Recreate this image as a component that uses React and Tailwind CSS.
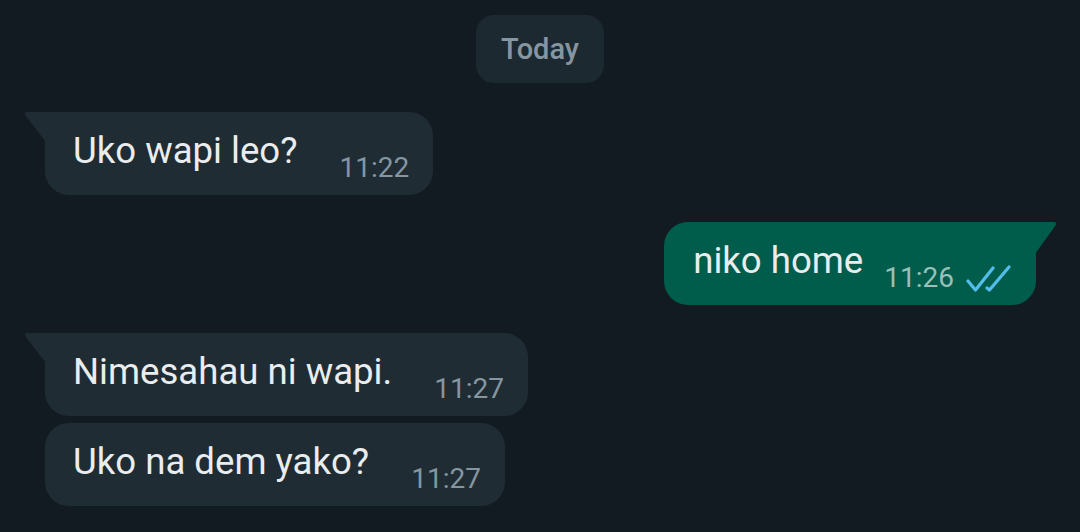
import React from "react";

const messages = [
  { id: 1, text: "Uko wapi leo?", time: "11:22", out: false, tail: true, gap: "ml-[42px]", top: "mt-[29px]" },
  { id: 2, text: "niko home", time: "11:26", out: true, tail: true, gap: "ml-[21px]", top: "mt-[27px]" },
  { id: 3, text: "Nimesahau ni wapi.", time: "11:27", out: false, tail: true, gap: "ml-[42px]", top: "mt-[28px]" },
  { id: 4, text: "Uko na dem yako?", time: "11:27", out: false, tail: false, gap: "ml-[42px]", top: "mt-[7px]" },
];

function Ticks() {
  return (
    <svg width="45" height="29" viewBox="0 0 45 29" className="ml-[12px] mt-[2px]" fill="none">
      <path d="M2 17 L9.5 26 L27 4" stroke="#53bdeb" strokeWidth="3.2" strokeLinecap="round" strokeLinejoin="round" />
      <path d="M21 24 L23.5 26 L43 3" stroke="#53bdeb" strokeWidth="3.2" strokeLinecap="round" strokeLinejoin="round" />
    </svg>
  );
}

function Tail({ out }) {
  if (out) {
    return (
      <svg width="22" height="32" viewBox="0 0 22 32" className="absolute top-0 right-[-21px]">
        <path d="M0 0 H19 Q22 0 20.5 3.5 L0 32 Z" fill="#005c4b" />
      </svg>
    );
  }
  return (
    <svg width="22" height="30" viewBox="0 0 22 30" className="absolute top-0 left-[-21px]">
      <path d="M22 0 H3 Q0 0 1.5 3.5 L22 30 Z" fill="#202c33" />
    </svg>
  );
}

function Bubble({ m }) {
  const shape = m.tail
    ? m.out
      ? "rounded-[24px] rounded-tr-none"
      : "rounded-[24px] rounded-tl-none"
    : "rounded-[24px]";
  return (
    <div className={`flex ${m.out ? "justify-end pr-[44px]" : "pl-[45px]"} ${m.top}`}>
      <div
        className={`relative flex items-start pt-[17px] pb-[11px] ${m.out ? "bg-[#005c4b] pl-[29px] pr-[25px]" : "bg-[#202c33] pl-[28px] pr-[24px]"} ${shape}`}
      >
        {m.tail && <Tail out={m.out} />}
        <span className="text-[36.6px] leading-[44px] text-[#e9edef] whitespace-nowrap">{m.text}</span>
        <span
          className={`${m.gap} mt-[23px] flex items-start text-[28px] leading-[32px] whitespace-nowrap ${m.out ? "text-[#99c1b9]" : "text-[#8696a0]"}`}
        >
          {m.time}
          {m.out && <Ticks />}
        </span>
      </div>
    </div>
  );
}

export default function App() {
  return (
    <div
      className="w-[1080px] h-[532px] overflow-hidden bg-[#111b21] flex flex-col"
      style={{ fontFamily: "Roboto, 'Noto Sans', sans-serif" }}
    >
      <div className="flex justify-center mt-[15px]">
        <div className="h-[68px] px-[25px] pt-[2px] flex items-center rounded-[18px] bg-[#1d2930] text-[#8696a0] text-[29px] font-medium">
          Today
        </div>
      </div>
      {messages.map((m) => (
        <Bubble key={m.id} m={m} />
      ))}
    </div>
  );
}
